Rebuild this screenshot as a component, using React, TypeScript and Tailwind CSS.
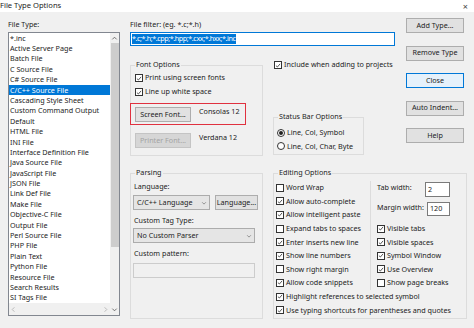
import React from "react";

const fileTypes = [
  "*.inc",
  "Active Server Page",
  "Batch File",
  "C Source File",
  "C# Source File",
  "C/C++ Source File",
  "Cascading Style Sheet",
  "Custom Command Output",
  "Default",
  "HTML File",
  "INI File",
  "Interface Definition File",
  "Java Source File",
  "JavaScript File",
  "JSON File",
  "Link Def File",
  "Make File",
  "Objective-C File",
  "Output File",
  "Perl Source File",
  "PHP File",
  "Plain Text",
  "Python File",
  "Resource File",
  "Search Results",
  "SI Tags File",
];

const arrows: Record<string, string> = {
  up: "M1.5 5 L4 2.5 L6.5 5",
  down: "M1.5 3 L4 5.5 L6.5 3",
  left: "M5 1.5 L2.5 4 L5 6.5",
  right: "M3 1.5 L5.5 4 L3 6.5",
};

function Arrow({ dir, className }: { dir: string; className: string }) {
  return (
    <svg viewBox="0 0 8 8" className={className}>
      <path d={arrows[dir]} fill="none" stroke="currentColor" strokeWidth="1" />
    </svg>
  );
}

function Check({ on }: { on?: boolean }) {
  return (
    <span className="w-[8px] h-[8px] shrink-0 border border-[#333] bg-white flex items-center justify-center">
      {on && (
        <svg viewBox="0 0 8 8" className="w-[7px] h-[7px]">
          <path d="M1.2 4.2 L3.2 6 L6.8 1.8" fill="none" stroke="#222" strokeWidth="1" />
        </svg>
      )}
    </span>
  );
}

function CheckRow({ on, label }: { on?: boolean; label: string }) {
  return (
    <div className="h-[13.6px] flex items-center gap-[2px] whitespace-nowrap">
      <Check on={on} />
      <span>{label}</span>
    </div>
  );
}

function Radio({ on, label }: { on?: boolean; label: string }) {
  return (
    <div className="h-[13.5px] flex items-center gap-[2px] whitespace-nowrap">
      <span className="w-[8px] h-[8px] rounded-full border border-[#333] bg-white flex items-center justify-center">
        {on && <span className="w-[4px] h-[4px] rounded-full bg-[#222]" />}
      </span>
      <span>{label}</span>
    </div>
  );
}

export default function App() {
  return (
    <div className="w-[474px] h-[328px] overflow-hidden bg-[#f0f0f0] text-[7.2px] leading-none text-[#1c1c1c] font-['Noto_Sans',sans-serif]">
      {/* title bar */}
      <div className="h-[12px] bg-white flex items-center justify-between pr-[6px]">
        <span className="text-[7.6px]">File Type Options</span>
        <span className="text-[9px] text-[#444]">×</span>
      </div>

      <div className="flex pl-[8px] pt-[6px]">
        {/* file type list */}
        <div className="w-[112px] flex flex-col">
          <div className="h-[14px] flex items-center">File Type:</div>
          <div className="h-[284px] border border-[#828790] bg-white flex flex-col">
            <div className="flex flex-1">
              <div className="w-[101px] flex flex-col">
                {fileTypes.map((t) => (
                  <div
                    key={t}
                    className={
                      t === "C/C++ Source File"
                        ? "h-[10.4px] flex items-center pl-[1px] bg-[#0078d7] text-white whitespace-nowrap"
                        : "h-[10.4px] flex items-center pl-[1px] whitespace-nowrap"
                    }
                  >
                    {t}
                  </div>
                ))}
              </div>
              <div className="flex-1 bg-[#f0f0f0] flex flex-col items-center">
                <div className="h-[10px] flex items-center">
                  <Arrow dir="up" className="w-[7px] h-[7px] text-[#606060]" />
                </div>
                <div className="w-[8px] h-[204px] bg-[#cdcdcd]" />
              </div>
            </div>
            <div className="h-[13px] flex">
              <div className="w-[101px] bg-[#f0f0f0] flex items-center justify-between px-[1px]">
                <Arrow dir="left" className="w-[7px] h-[7px] text-[#b0b0b0]" />
                <Arrow dir="right" className="w-[7px] h-[7px] text-[#b0b0b0]" />
              </div>
              <div className="flex-1 bg-[#f0f0f0] flex items-center justify-center">
                <Arrow dir="down" className="w-[7px] h-[7px] text-[#606060]" />
              </div>
            </div>
          </div>
        </div>

        {/* right side */}
        <div className="ml-[10px] w-[337px] flex flex-col">
          <div className="flex">
            <div className="w-[265px] flex flex-col">
              <div className="h-[14px] flex items-center">File filter: (eg. *.c;*.h)</div>
              <div className="h-[14px] border border-[#0078d7] bg-white flex items-center pl-[1px]">
                <span className="bg-[#0078d7] text-white h-[10px] flex items-center tracking-[-0.42px]">
                  *.c;*.h;*.cpp;*.hpp;*.cxx;*.hxx;*.inc
                </span>
              </div>

              <div className="mt-[13px] flex">
                <fieldset className="w-[133px] border border-[#dcdcdc] pl-[4px] pb-[7px]">
                  <legend className="h-[12px] px-[1px] flex items-center">Font Options</legend>
                  <div className="h-[14px] flex items-center gap-[2px]">
                    <Check on />
                    <span>Print using screen fonts</span>
                  </div>
                  <div className="h-[14px] flex items-center gap-[2px]">
                    <Check on />
                    <span>Line up white space</span>
                  </div>
                  <div className="relative mt-[8px] h-[15px] flex items-center">
                    <div className="w-[56px] h-[15px] border border-[#adadad] bg-[#e1e1e1] flex items-center justify-center">
                      Screen Font...
                    </div>
                    <span className="ml-[8px] -mt-[6px]">Consolas 12</span>
                    <div className="absolute -left-[5px] -top-[4px] w-[116px] h-[22px] border-[1.5px] border-[#e0313f]" />
                  </div>
                  <div className="mt-[11px] h-[15px] flex items-center">
                    <div className="w-[56px] h-[15px] border border-[#c4c4c4] bg-[#d6d6d6] text-[#a3a3a3] flex items-center justify-center">
                      Printer Font...
                    </div>
                    <span className="ml-[8px] -mt-[6px]">Verdana 12</span>
                  </div>
                </fieldset>

                <div className="ml-[10px] flex flex-col">
                  <div className="h-[12px] flex items-center gap-[2px] pl-[1px] whitespace-nowrap">
                    <Check on />
                    <span>Include when adding to projects</span>
                  </div>
                  <fieldset className="mt-[40px] w-[91px] border border-[#dcdcdc] pl-[3px] pb-[1px]">
                    <legend className="h-[12px] px-[1px] ml-[1px] flex items-center">Status Bar Options</legend>
                    <div className="mt-[3px]">
                      <Radio on label="Line, Col, Symbol" />
                      <Radio label="Line, Col, Char, Byte" />
                    </div>
                  </fieldset>
                </div>
              </div>
            </div>

            {/* buttons */}
            <div className="ml-[11px] w-[58px] flex flex-col gap-[12.5px]">
              <div className="h-[15px] border border-[#adadad] bg-[#e1e1e1] flex items-center justify-center">Add Type...</div>
              <div className="h-[15px] border border-[#adadad] bg-[#e1e1e1] flex items-center justify-center">Remove Type</div>
              <div className="h-[15px] border border-[#0078d7] bg-[#e5f1fb] flex items-center justify-center">Close</div>
              <div className="h-[15px] border border-[#adadad] bg-[#e1e1e1] flex items-center justify-center">Auto Indent...</div>
              <div className="h-[15px] border border-[#adadad] bg-[#e1e1e1] flex items-center justify-center">Help</div>
            </div>
          </div>

          {/* bottom groups */}
          <div className="mt-[11px] flex">
            <fieldset className="w-[133px] h-[152px] border border-[#dcdcdc] px-[2px]">
              <legend className="h-[12px] px-[1px] ml-[2px] flex items-center">Parsing</legend>
              <div className="mt-[2px] h-[12px] flex items-center pl-[1px]">Language:</div>
              <div className="mt-[2px] flex">
                <div className="w-[77px] h-[15px] border border-[#acacac] bg-[#e5e5e5] flex items-center justify-between pl-[3px] pr-[2px]">
                  <span>C/C++ Language</span>
                  <Arrow dir="down" className="w-[6px] h-[6px] text-[#777]" />
                </div>
                <div className="ml-[5px] w-[43px] h-[15px] border border-[#adadad] bg-[#e1e1e1] flex items-center justify-center">
                  Language...
                </div>
              </div>
              <div className="mt-[5px] h-[12px] flex items-center pl-[1px]">Custom Tag Type:</div>
              <div className="mt-[1px] w-[122px] h-[15px] border border-[#acacac] bg-[#e5e5e5] flex items-center justify-between pl-[3px] pr-[2px]">
                <span>No Custom Parser</span>
                <Arrow dir="down" className="w-[6px] h-[6px] text-[#777]" />
              </div>
              <div className="mt-[5px] h-[12px] flex items-center pl-[1px]">Custom pattern:</div>
              <div className="mt-[3px] w-[122px] h-[15px] border border-[#cccccc] bg-[#f0f0f0]" />
            </fieldset>

            <fieldset className="ml-[10px] w-[194px] h-[152px] border border-[#dcdcdc] pl-[2px]">
              <legend className="h-[12px] px-[1px] ml-[2px] flex items-center">Editing Options</legend>
              <div className="mt-[2px] flex">
                <div className="w-[94px] flex flex-col">
                  <CheckRow label="Word Wrap" />
                  <CheckRow on label="Allow auto-complete" />
                  <CheckRow on label="Allow intelligent paste" />
                  <CheckRow label="Expand tabs to spaces" />
                  <CheckRow on label="Enter inserts new line" />
                  <CheckRow on label="Show line numbers" />
                  <CheckRow label="Show right margin" />
                  <CheckRow on label="Allow code snippets" />
                </div>
                <div className="border-l border-[#dcdcdc] pl-[6px] flex flex-col">
                  <div className="h-[40.8px] w-[73px] pt-[1px]">
                    <div className="h-[15px] flex items-start justify-between">
                      <span className="mt-[2px]">Tab width:</span>
                      <div className="w-[25px] h-[15px] border border-[#7a7a7a] bg-white flex items-center pl-[2px]">2</div>
                    </div>
                    <div className="mt-[5px] h-[14px] flex items-center justify-between">
                      <span className="-mt-[2px]">Margin width:</span>
                      <div className="w-[23px] h-[14px] border border-[#7a7a7a] bg-white flex items-center pl-[2px]">120</div>
                    </div>
                  </div>
                  <CheckRow on label="Visible tabs" />
                  <CheckRow on label="Visible spaces" />
                  <CheckRow on label="Symbol Window" />
                  <CheckRow on label="Use Overview" />
                  <CheckRow label="Show page breaks" />
                </div>
              </div>
              <CheckRow on label="Highlight references to selected symbol" />
              <CheckRow on label="Use typing shortcuts for parentheses and quotes" />
            </fieldset>
          </div>
        </div>
      </div>
    </div>
  );
}
